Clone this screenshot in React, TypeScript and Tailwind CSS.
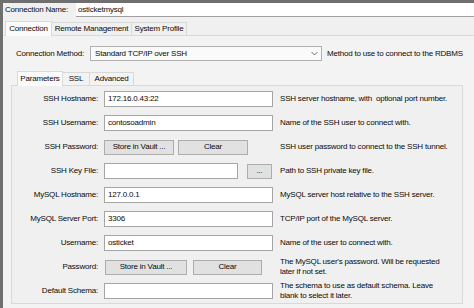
import React from "react";

function Btn({ w, children }: { w: string; children: React.ReactNode }) {
  return (
    <div className={`${w} h-[15px] bg-[#e1e1e1] border border-[#adadad] flex items-center justify-center`}>
      {children}
    </div>
  );
}

function Field({ w = "w-[169px]", value = "" }: { w?: string; value?: string }) {
  return (
    <div className={`${w} h-[16px] bg-white border border-[#a5a5a5] flex items-center pl-[3px]`}>
      {value}
    </div>
  );
}

function Row({ label, children, desc }: { label: string; children: React.ReactNode; desc: React.ReactNode }) {
  return (
    <div className="flex items-center h-[16px]">
      <div className="w-[91px] pr-[6px] text-right whitespace-nowrap">{label}</div>
      <div className="w-[176px] flex items-center">{children}</div>
      <div className="whitespace-pre leading-[10px]">{desc}</div>
    </div>
  );
}

export default function App() {
  return (
    <div className="w-[474px] h-[308px] overflow-hidden bg-[#f0f0f0] border-t-[3px] border-l-[3px] border-[#6f6f6f] font-['Liberation_Sans',Arial,sans-serif] text-[8px] tracking-[-0.2px] text-[#0a0a0a] leading-none">
      {/* Connection name */}
      <div className="flex items-center h-[14px]">
        <div className="ml-[2px] w-[71px] whitespace-nowrap">Connection Name:</div>
        <div className="flex-1 h-full bg-white border-b border-[#a0a0a0] flex items-center pl-[2px]">osticketmysql</div>
      </div>

      {/* Top tabs */}
      <div className="mt-[5px] flex items-end h-[14px] border-b border-[#d9d9d9] pl-[2px]">
        <div className="w-[47px] h-[15px] -mb-px bg-[#fbfbfb] border border-b-0 border-[#d9d9d9] flex items-center justify-center">Connection</div>
        <div className="w-[80px] h-[13px] border-t border-r border-[#d9d9d9] flex items-center justify-center">Remote Management</div>
        <div className="w-[55px] h-[13px] border-t border-r border-[#d9d9d9] flex items-center justify-center">System Profile</div>
      </div>

      {/* Connection tab content */}
      <div className="bg-[#f3f3f3] h-[272px]">
        <div className="pt-[10px] flex items-center">
          <div className="ml-[13px] w-[74px] whitespace-nowrap">Connection Method:</div>
          <div className="w-[232px] h-[15px] bg-[#fafafa] border border-[#b0b0b0] flex items-center pl-[4px] justify-between pr-[3px]">
            <span>Standard TCP/IP over SSH</span>
            <svg width="7" height="5" viewBox="0 0 7 5">
              <path d="M0.5 1 L3.5 4 L6.5 1" fill="none" stroke="#606060" strokeWidth="0.9" />
            </svg>
          </div>
          <div className="ml-[5px] whitespace-nowrap">Method to use to connect to the RDBMS</div>
        </div>

        {/* Inner tabs */}
        <div className="mt-[10px] ml-[8px] w-[452px]">
          <div className="flex items-end h-[14px] pl-[6px]">
            <div className="w-[46px] h-[15px] -mb-px bg-[#fbfbfb] border border-b-0 border-[#d9d9d9] flex items-center justify-center relative z-10">Parameters</div>
            <div className="w-[27px] h-[13px] border-t border-r border-[#d9d9d9] flex items-center justify-center">SSL</div>
            <div className="w-[44px] h-[13px] border-t border-r border-[#d9d9d9] flex items-center justify-center">Advanced</div>
          </div>
          <div className="h-[219px] border border-[#d9d9d9] bg-[#f0f0f0] pt-[5px] pl-px flex flex-col gap-[8px]">
            <Row label="SSH Hostname:" desc="SSH server hostname, with  optional port number.">
              <Field value="172.16.0.43:22" />
            </Row>
            <Row label="SSH Username:" desc="Name of the SSH user to connect with.">
              <Field value="contosoadmin" />
            </Row>
            <Row label="SSH Password:" desc="SSH user password to connect to the SSH tunnel.">
              <Btn w="w-[70px]">Store in Vault ...</Btn>
              <div className="ml-[4px]"><Btn w="w-[70px]">Clear</Btn></div>
            </Row>
            <Row label="SSH Key File:" desc="Path to SSH private key file.">
              <Field w="w-[134px]" />
              <div className="ml-[9px]"><Btn w="w-[25px]">...</Btn></div>
            </Row>
            <Row label="MySQL Hostname:" desc="MySQL server host relative to the SSH server.">
              <Field value="127.0.0.1" />
            </Row>
            <Row label="MySQL Server Port:" desc="TCP/IP port of the MySQL server.">
              <Field value="3306" />
            </Row>
            <Row label="Username:" desc="Name of the user to connect with.">
              <Field value="osticket" />
            </Row>
            <Row
              label="Password:"
              desc={"The MySQL user's password. Will be requested\nlater if not set."}
            >
              <div className="ml-[1px]"><Btn w="w-[82px]">Store in Vault ...</Btn></div>
              <div className="ml-[6px]"><Btn w="w-[69px]">Clear</Btn></div>
            </Row>
            <Row
              label="Default Schema:"
              desc={"The schema to use as default schema. Leave\nblank to select it later."}
            >
              <Field />
            </Row>
          </div>
        </div>
      </div>
    </div>
  );
}
